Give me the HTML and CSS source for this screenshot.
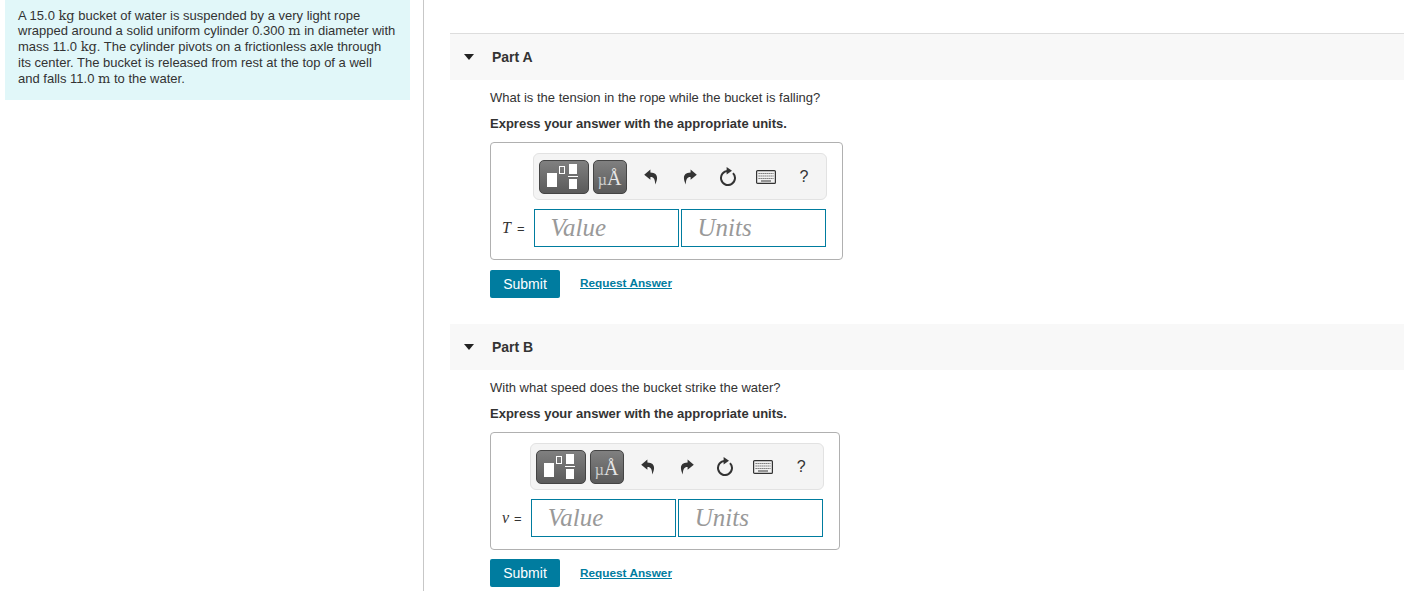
FILE: index.html
```html
<!DOCTYPE html>
<html lang="en">
<head>
    <meta charset="UTF-8">
    <title>Bucket of water</title>
    <link rel="stylesheet" href="styles.css">
</head>
<body>

<!-- Shared icons -->
<svg class="icon-defs" width="0" height="0">
    <symbol id="icon-undo" viewBox="0 0 14 16">
        <path d="M6.4 0.6 L0.2 5.8 L6.4 10.8 L6.4 8 C9.6 7.8 11 9.8 11.2 15.4 C14.2 9.6 14.2 3.8 6.4 3.6 Z"/>
    </symbol>
    <symbol id="icon-reset" viewBox="0 0 18 19">
        <path d="M9 4 A7 7 0 1 0 14 6.1" fill="none" stroke="currentColor" stroke-width="2"/>
        <path d="M7.6 0 L13 3.8 L7.6 7.4 Z"/>
    </symbol>
    <symbol id="icon-keyboard" viewBox="0 0 20 14">
        <rect x="0.6" y="0.6" width="18.8" height="12.8" rx="1" fill="#f2f2f2" stroke="#333" stroke-width="1.2"/>
        <path d="M2.5 3.5h15M2.5 6h15" stroke="#666" stroke-width="1.2" stroke-dasharray="1.3 0.7" fill="none"/>
        <path d="M2.5 8.5h15" stroke="#666" stroke-width="1.2" stroke-dasharray="1.3 0.7" fill="none"/>
        <path d="M5 11h10" stroke="#555" stroke-width="1.2" fill="none"/>
    </symbol>
</svg>

<div class="page">
    <!-- Problem statement -->
    <aside class="left-col">
        <div class="problem">
            A 15.0 <span class="unit">kg</span> bucket of water is suspended by a very light rope
            wrapped around a solid uniform cylinder 0.300 <span class="unit">m</span> in diameter with
            mass 11.0 <span class="unit">kg</span>. The cylinder pivots on a frictionless axle through
            its center. The bucket is released from rest at the top of a well
            and falls 11.0 <span class="unit">m</span> to the water.
        </div>
    </aside>

    <main class="right-col">
        <!-- Part A -->
        <section class="part part-a">
            <div class="part-head">
                <span class="caret"></span>
                <h2>Part A</h2>
            </div>
            <div class="part-body">
                <p class="question">What is the tension in the rope while the bucket is falling?</p>
                <p class="express">Express your answer with the appropriate units.</p>
                <div class="answer-box">
                    <div class="toolbar">
                        <button class="tool-btn templates">
                            <span class="big-sq"></span><span class="small-sq"></span>
                            <span class="fraction"><i></i><b></b><i></i></span>
                        </button>
                        <button class="tool-btn symbols"><span class="mu">&micro;</span>&Aring;</button>
                        <svg class="tool-icon undo"><use href="#icon-undo"/></svg>
                        <svg class="tool-icon redo"><use href="#icon-undo"/></svg>
                        <svg class="tool-icon reset"><use href="#icon-reset"/></svg>
                        <svg class="tool-icon keyboard"><use href="#icon-keyboard"/></svg>
                        <span class="help">?</span>
                    </div>
                    <label class="var-label label-t"><em>T</em> <span>=</span></label>
                    <div class="inputs">
                        <input type="text" placeholder="Value">
                        <input type="text" placeholder="Units">
                    </div>
                </div>
                <div class="actions">
                    <button class="submit">Submit</button>
                    <a href="#" class="request">Request Answer</a>
                </div>
            </div>
        </section>

        <!-- Part B -->
        <section class="part part-b">
            <div class="part-head">
                <span class="caret"></span>
                <h2>Part B</h2>
            </div>
            <div class="part-body">
                <p class="question">With what speed does the bucket strike the water?</p>
                <p class="express">Express your answer with the appropriate units.</p>
                <div class="answer-box">
                    <div class="toolbar">
                        <button class="tool-btn templates">
                            <span class="big-sq"></span><span class="small-sq"></span>
                            <span class="fraction"><i></i><b></b><i></i></span>
                        </button>
                        <button class="tool-btn symbols"><span class="mu">&micro;</span>&Aring;</button>
                        <svg class="tool-icon undo"><use href="#icon-undo"/></svg>
                        <svg class="tool-icon redo"><use href="#icon-undo"/></svg>
                        <svg class="tool-icon reset"><use href="#icon-reset"/></svg>
                        <svg class="tool-icon keyboard"><use href="#icon-keyboard"/></svg>
                        <span class="help">?</span>
                    </div>
                    <label class="var-label label-v"><em>v</em> <span>=</span></label>
                    <div class="inputs">
                        <input type="text" placeholder="Value">
                        <input type="text" placeholder="Units">
                    </div>
                </div>
                <div class="actions">
                    <button class="submit">Submit</button>
                    <a href="#" class="request">Request Answer</a>
                </div>
            </div>
        </section>
    </main>
</div>

</body>
</html>
```

FILE: styles.css
```css
html, body {
    margin: 0;
    padding: 0;
    height: 591px;
    overflow: hidden;
    background-color: #fff;
}
body {
    font-family: "Liberation Sans", Arial, sans-serif;
    font-size: 13px;
    color: #333;
}
.icon-defs {
    position: absolute;
}
.page {
    display: flex;
    height: 591px;
}
.left-col {
    box-sizing: border-box;
    width: 424px;
    flex-shrink: 0;
    padding-left: 5px;
    border-right: 1px solid #c7c7c7;
}
.problem {
    box-sizing: border-box;
    width: 405px;
    height: 100px;
    padding: 7.6px 14px 0 13px;
    background-color: #e1f7f9;
    line-height: 15.8px;
}
.unit {
    font-family: "DejaVu Serif", serif;
    font-size: 13px;
    line-height: 0;
}
.right-col {
    flex: 1;
    padding: 33px 0 0 26px;
}
.part-head {
    display: flex;
    align-items: center;
    height: 46px;
    padding-left: 14px;
    background-color: #f8f8f8;
}
.part-a .part-head {
    border-top: 1px solid #ddd;
}
.part-b {
    margin-top: 26px;
}
.part-head h2 {
    margin: 0 0 0 18px;
    font-size: 14px;
    font-weight: bold;
    color: #333;
}
.caret {
    width: 0;
    height: 0;
    border-left: 5.5px solid transparent;
    border-right: 5.5px solid transparent;
    border-top: 6px solid #222;
}
.part-body {
    padding-left: 40px;
}
.question {
    margin: 0;
    padding-top: 10px;
    line-height: 16px;
}
.express {
    margin: 10px 0 0;
    line-height: 16px;
    font-weight: bold;
}
.answer-box {
    display: inline-grid;
    grid-template-columns: auto auto;
    align-content: start;
    row-gap: 9px;
    box-sizing: border-box;
    height: 118px;
    margin-top: 10px;
    padding: 10px 15px 0 10px;
    border: 1px solid #b0b0b0;
    border-radius: 4px;
    vertical-align: top;
}
.toolbar {
    grid-column: 2;
    display: flex;
    align-items: center;
    box-sizing: border-box;
    width: 294px;
    height: 47px;
    margin-left: -1px;
    padding-left: 5px;
    background-color: #f4f4f4;
    border: 1px solid #e2e2e2;
    border-radius: 6px;
}
.tool-btn {
    position: relative;
    height: 34px;
    padding: 0;
    border: 1px solid #444;
    border-radius: 5px;
    background: linear-gradient(#808080, #5a5a5a);
    color: #eee;
}
.templates {
    width: 50px;
}
.symbols {
    width: 34px;
    margin-left: 4px;
    font-family: "Liberation Serif", serif;
    font-size: 20px;
    line-height: 34px;
    color: #e6e6e6;
}
.mu {
    font-size: 16px;
    color: #ccc;
}
/* little squares on the template button sit over the button */
.big-sq {
    position: absolute;
    left: 7px;
    top: 12px;
    width: 10px;
    height: 14px;
    background-color: #fff;
}
.small-sq {
    position: absolute;
    left: 19px;
    top: 5px;
    width: 4px;
    height: 6px;
    border: 1px solid #fff;
}
.fraction {
    position: absolute;
    left: 28px;
    top: 3px;
    display: flex;
    flex-direction: column;
    align-items: center;
    width: 10px;
}
.fraction i {
    width: 8px;
    height: 10px;
    background-color: #fff;
}
.fraction b {
    width: 10px;
    height: 1px;
    margin: 2px 0;
    background-color: #fff;
}
.tool-icon {
    flex-shrink: 0;
    color: #333;
    fill: #333;
}
.undo, .redo {
    width: 14px;
    height: 16px;
}
.undo {
    margin-left: 17px;
}
.redo {
    margin-left: 25px;
    transform: scaleX(-1);
}
.reset {
    width: 18px;
    height: 19px;
    margin-left: 22px;
}
.keyboard {
    width: 20px;
    height: 14px;
    margin-left: 19px;
}
.help {
    margin-left: 24px;
    font-size: 16px;
    color: #333;
}
.var-label {
    display: flex;
    align-items: center;
    gap: 5px;
    height: 38px;
    font-family: "Liberation Serif", serif;
    font-size: 16px;
}
.var-label span {
    font-family: "Liberation Sans", Arial, sans-serif;
    font-size: 13px;
}
.label-t {
    gap: 6px;
    padding-right: 9px;
    padding-left: 1px;
}
.label-v {
    padding-right: 9px;
    padding-left: 1px;
}
.inputs {
    display: flex;
    gap: 2px;
}
.inputs input {
    box-sizing: border-box;
    width: 145px;
    height: 38px;
    padding: 0 16px;
    border: 1px solid #007c9f;
    border-radius: 0;
    outline: none;
    font-family: "Liberation Serif", serif;
    font-size: 25px;
    font-style: italic;
}
.inputs input::placeholder {
    color: #999;
    opacity: 1;
}
.actions {
    display: flex;
    align-items: center;
    gap: 20px;
    margin-top: 10px;
}
.part-b .actions {
    margin-top: 9px;
}
.submit {
    width: 70px;
    height: 28px;
    padding: 0;
    border: none;
    border-radius: 2px;
    background-color: #007c9f;
    color: #fff;
    font-family: "Liberation Sans", Arial, sans-serif;
    font-size: 14px;
}
.request {
    margin-bottom: 2px;
    font-size: 11.8px;
    font-weight: bold;
    color: #007c9f;
}
.part-b .request {
    margin-bottom: 0;
}
```
